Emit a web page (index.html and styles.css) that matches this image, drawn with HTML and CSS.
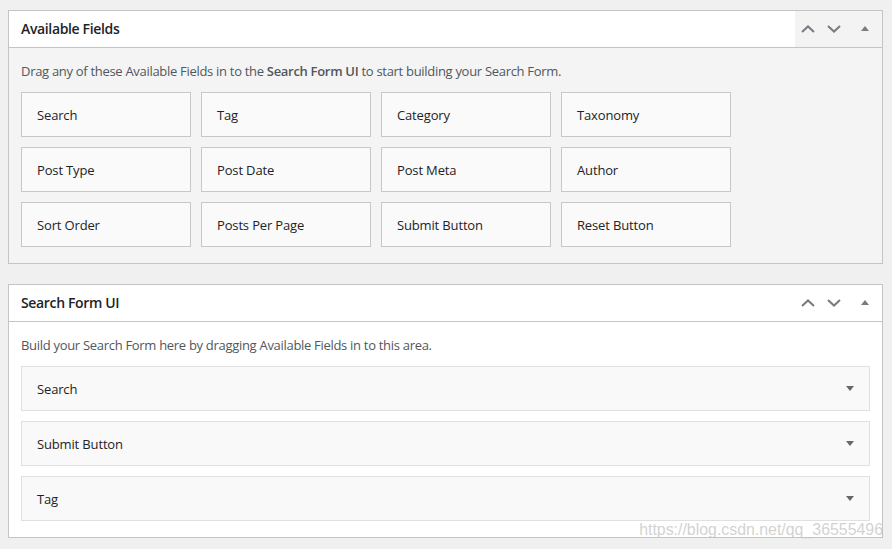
FILE: index.html
```html
<!DOCTYPE html>
<html lang="en">
<head>
<meta charset="utf-8">
<title>Search Form Builder</title>
<link rel="stylesheet" href="styles.css">
</head>
<body>
<div class="wrap">
  <section class="postbox postbox-active">
    <div class="postbox-header">
      <h2 class="hndle">Available Fields</h2>
      <div class="handle-actions">
        <button class="handle-btn handle-up" aria-label="Move up">
          <svg width="14" height="8" viewBox="0 0 14 8"><path d="M1 7 L7 1.4 L13 7" fill="none" stroke="#787c82" stroke-width="2"/></svg>
        </button>
        <button class="handle-btn handle-down" aria-label="Move down">
          <svg width="14" height="8" viewBox="0 0 14 8"><path d="M1 1 L7 6.6 L13 1" fill="none" stroke="#787c82" stroke-width="2"/></svg>
        </button>
        <button class="handle-btn handle-toggle" aria-label="Toggle panel">
          <svg width="8" height="5" viewBox="0 0 8 5"><path d="M0 5 L4 0 L8 5 Z" fill="#787c82"/></svg>
        </button>
      </div>
    </div>
    <div class="inside inside-grey">
      <p class="desc">Drag any of these Available Fields in to the <strong>Search Form UI</strong> to start building your Search Form.</p>
      <div class="field-grid">
        <div class="field">Search</div>
        <div class="field">Tag</div>
        <div class="field">Category</div>
        <div class="field">Taxonomy</div>
        <div class="field">Post Type</div>
        <div class="field">Post Date</div>
        <div class="field">Post Meta</div>
        <div class="field">Author</div>
        <div class="field">Sort Order</div>
        <div class="field">Posts Per Page</div>
        <div class="field">Submit Button</div>
        <div class="field">Reset Button</div>
      </div>
    </div>
  </section>

  <section class="postbox">
    <div class="postbox-header">
      <h2 class="hndle">Search Form UI</h2>
      <div class="handle-actions handle-actions-plain">
        <button class="handle-btn handle-up" aria-label="Move up">
          <svg width="14" height="8" viewBox="0 0 14 8"><path d="M1 7 L7 1.4 L13 7" fill="none" stroke="#787c82" stroke-width="2"/></svg>
        </button>
        <button class="handle-btn handle-down" aria-label="Move down">
          <svg width="14" height="8" viewBox="0 0 14 8"><path d="M1 1 L7 6.6 L13 1" fill="none" stroke="#787c82" stroke-width="2"/></svg>
        </button>
        <button class="handle-btn handle-toggle" aria-label="Toggle panel">
          <svg width="8" height="5" viewBox="0 0 8 5"><path d="M0 5 L4 0 L8 5 Z" fill="#787c82"/></svg>
        </button>
      </div>
    </div>
    <div class="inside">
      <p class="desc">Build your Search Form here by dragging Available Fields in to this area.</p>
      <div class="form-list">
        <div class="form-item"><span>Search</span><svg class="caret" width="8" height="5" viewBox="0 0 8 5"><path d="M0 0 L8 0 L4 5 Z" fill="#646970"/></svg></div>
        <div class="form-item"><span>Submit Button</span><svg class="caret" width="8" height="5" viewBox="0 0 8 5"><path d="M0 0 L8 0 L4 5 Z" fill="#646970"/></svg></div>
        <div class="form-item"><span>Tag</span><svg class="caret" width="8" height="5" viewBox="0 0 8 5"><path d="M0 0 L8 0 L4 5 Z" fill="#646970"/></svg></div>
      </div>
    </div>
  </section>
  <div class="watermark">https://blog.csdn.net/qq_36555496</div>
</div>
</body>
</html>
```

FILE: styles.css
```css
* { box-sizing: border-box; }

html, body {
  margin: 0;
  padding: 0;
  background: #f0f0f1;
}

body {
  font-family: "Open Sans", "Noto Sans", "Liberation Sans", sans-serif;
  font-size: 13px;
  color: #1d2327;
}

.wrap {
  position: relative;
  padding: 10px 9px 0 8px;
  width: 892px;
  height: 549px;
  overflow: hidden;
}

.postbox {
  border: 1px solid #c3c4c7;
  background: #fff;
  width: 875px;
  margin-bottom: 20px;
}

.postbox-header {
  display: flex;
  align-items: stretch;
  justify-content: space-between;
  height: 37px;
  border-bottom: 1px solid #c3c4c7;
  background: #fff;
}

.hndle {
  margin: 0;
  padding: 0 12px;
  font-size: 14px;
  font-weight: 600;
  line-height: 36px;
  letter-spacing: -0.35px;
  color: #1d2327;
}

.handle-actions {
  display: flex;
  background: #f3f3f3;
}

.handle-actions-plain {
  background: transparent;
}

.handle-btn {
  border: 0;
  background: transparent;
  padding: 0;
  margin: 0;
  display: flex;
  align-items: center;
  justify-content: center;
  height: 36px;
  cursor: pointer;
}

.handle-up, .handle-down { width: 26px; }
.handle-toggle { width: 35px; }
.handle-toggle svg { margin-top: -1px; }

.inside {
  padding: 13px 12px 16px;
}

.inside-grey {
  background: #f4f4f4;
}

.desc {
  margin: 0 0 11px;
  line-height: 20px;
  letter-spacing: -0.3px;
  color: #50575e;
}

.desc strong {
  font-weight: 600;
}

.field-grid {
  display: grid;
  grid-template-columns: repeat(4, 170px);
  gap: 10px;
}

.field {
  height: 45px;
  display: flex;
  align-items: center;
  padding: 0 15px;
  border: 1px solid #c8c8c8;
  background: #fafafa;
  color: #1d2327;
  letter-spacing: -0.15px;
}

.form-list {
  display: flex;
  flex-direction: column;
  gap: 10px;
}

.form-item {
  height: 45px;
  display: flex;
  align-items: center;
  justify-content: space-between;
  padding: 0 15px;
  border: 1px solid #e0e0e0;
  background: #f9f9f9;
  color: #1d2327;
  letter-spacing: -0.15px;
}

.watermark {
  position: absolute;
  right: 9px;
  bottom: 10px;
  font-family: "Liberation Sans", Arial, sans-serif;
  font-size: 15.9px;
  color: rgba(195, 195, 195, 0.75);
  pointer-events: none;
}
```
